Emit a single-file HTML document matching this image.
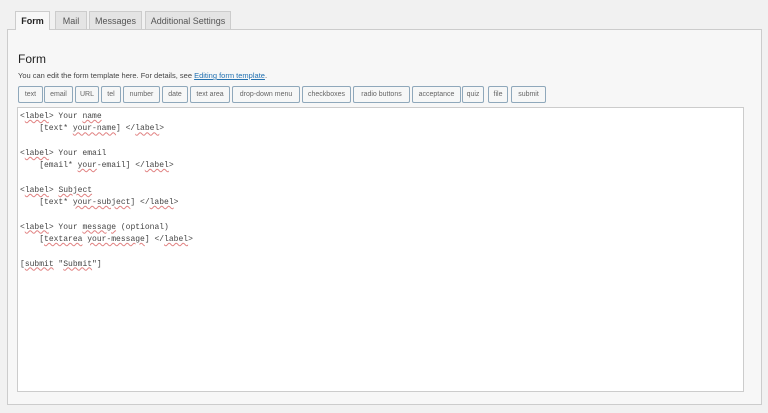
<!DOCTYPE html>
<html><head><style>
body{margin:0;width:768px;height:413px;background:#f1f1f1;font-family:"Liberation Sans",sans-serif;position:relative;overflow:hidden}
.tab{position:absolute;top:11px;height:18px;border:1px solid #ccc;border-bottom:none;background:#e4e4e4;font-size:9px;color:#555;line-height:18px;text-align:center;box-sizing:border-box}
.tab.a{background:#f7f7f7;color:#222;font-weight:bold;height:19px}
.panel{position:absolute;left:7px;top:29px;width:755px;height:376px;border:1px solid #ccc;background:#f7f7f7;box-sizing:border-box}
h2{position:absolute;left:18px;top:52px;margin:0;font-size:12px;font-weight:normal;color:#222}
.desc{position:absolute;left:18px;top:71px;font-size:7.5px;color:#444}
.desc a{color:#2271b1;text-decoration:underline}
.b{position:absolute;top:86px;height:17px;border:1px solid #8fa8bb;border-radius:2px;background:#f6f7f7;font-size:7px;color:#666;line-height:15px;text-align:center;box-sizing:border-box}
.ta{position:absolute;left:17px;top:107px;width:727px;height:285px;background:#fff;border:1px solid #ccc;box-sizing:border-box}
pre{position:absolute;left:20px;top:111px;margin:0;font-family:"Liberation Mono",monospace;font-size:8px;line-height:12.3px;color:#444}
u{text-decoration:underline wavy #e08080;text-decoration-thickness:1px}
</style></head><body>
<div class="panel"></div>
<div class="tab a" style="left:15px;width:35px">Form</div>
<div class="tab" style="left:55px;width:32px">Mail</div>
<div class="tab" style="left:89px;width:53px">Messages</div>
<div class="tab" style="left:145px;width:86px">Additional Settings</div>
<h2>Form</h2>
<div class="desc">You can edit the form template here. For details, see <a>Editing form template</a>.</div>
<div class="b" style="left:18px;width:25px">text</div>
<div class="b" style="left:44px;width:29px">email</div>
<div class="b" style="left:75px;width:24px">URL</div>
<div class="b" style="left:101px;width:20px">tel</div>
<div class="b" style="left:123px;width:37px">number</div>
<div class="b" style="left:162px;width:26px">date</div>
<div class="b" style="left:190px;width:40px">text area</div>
<div class="b" style="left:232px;width:68px">drop-down menu</div>
<div class="b" style="left:302px;width:49px">checkboxes</div>
<div class="b" style="left:353px;width:57px">radio buttons</div>
<div class="b" style="left:412px;width:49px">acceptance</div>
<div class="b" style="left:462px;width:22px">quiz</div>
<div class="b" style="left:488px;width:20px">file</div>
<div class="b" style="left:511px;width:35px">submit</div>
<div class="ta"></div>
<pre>&lt;<u>label</u>&gt; Your <u>name</u>
    [text* <u>your-name</u>] &lt;/<u>label</u>&gt;

&lt;<u>label</u>&gt; Your email
    [email* <u>your</u>-email] &lt;/<u>label</u>&gt;

&lt;<u>label</u>&gt; <u>Subject</u>
    [text* <u>your-subject</u>] &lt;/<u>label</u>&gt;

&lt;<u>label</u>&gt; Your <u>message</u> (optional)
    [<u>textarea</u> <u>your-message</u>] &lt;/<u>label</u>&gt;

[<u>submit</u> "<u>Submit</u>"]</pre>
</body></html>
